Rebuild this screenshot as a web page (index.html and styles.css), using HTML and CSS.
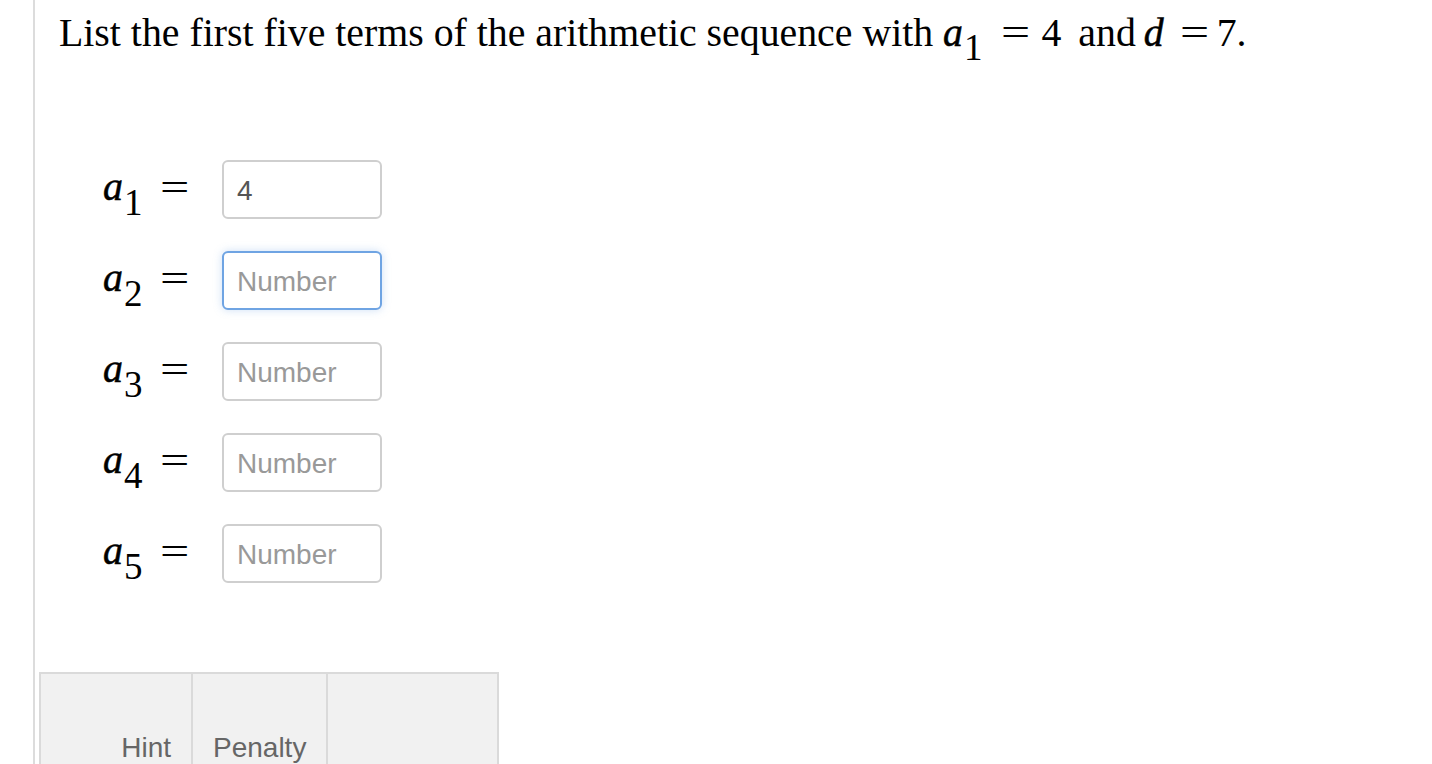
FILE: index.html
```html
<!DOCTYPE html>
<html lang="en">
<head>
  <meta charset="UTF-8">
  <title>Arithmetic Sequence</title>
  <link rel="stylesheet" href="styles.css">
</head>
<body>
<div class="question">
  <p class="prompt">List the first five terms of the arithmetic sequence with <span class="mi">a</span><sub class="msub">1</sub><span class="mo">=</span>4<span class="mtext"> and </span><span class="mi">d</span><span class="mo mo-last">=</span>7.</p>

  <div class="terms">
    <div class="term">
      <span class="label"><span class="mi">a</span><sub class="msub">1</sub></span>
      <span class="eq"><span class="mo">=</span></span>
      <input type="text" class="answer" value="4" placeholder="Number">
    </div>
    <div class="term">
      <span class="label"><span class="mi">a</span><sub class="msub">2</sub></span>
      <span class="eq"><span class="mo">=</span></span>
      <input type="text" class="answer focused" placeholder="Number">
    </div>
    <div class="term">
      <span class="label"><span class="mi">a</span><sub class="msub">3</sub></span>
      <span class="eq"><span class="mo">=</span></span>
      <input type="text" class="answer" placeholder="Number">
    </div>
    <div class="term">
      <span class="label"><span class="mi">a</span><sub class="msub">4</sub></span>
      <span class="eq"><span class="mo">=</span></span>
      <input type="text" class="answer" placeholder="Number">
    </div>
    <div class="term">
      <span class="label"><span class="mi">a</span><sub class="msub">5</sub></span>
      <span class="eq"><span class="mo">=</span></span>
      <input type="text" class="answer" placeholder="Number">
    </div>
  </div>

  <table class="hints">
    <tr>
      <th class="hint-col">Hint</th>
      <th class="penalty-col">Penalty</th>
      <th class="blank-col"></th>
    </tr>
  </table>
</div>
</body>
</html>
```

FILE: styles.css
```css
* {
  margin: 0;
  padding: 0;
  box-sizing: border-box;
}

body {
  font-family: 'Liberation Serif', 'Times New Roman', serif;
  background: #fff;
  color: #000;
  height: 764px;
  overflow: hidden;
}

.question {
  margin-left: 33px;
  border-left: 2px solid #dcdcdc;
  height: 764px;
  overflow: hidden;
  padding-left: 4px;
}

.prompt {
  font-size: 39.8px;
  line-height: 40px;
  height: 53px;
  padding: 13px 0 0 20px;
  white-space: nowrap;
}

/* math bits, roughly the look of the TeX fonts */
.mi {
  font-style: italic;
  -webkit-text-stroke: 0.5px #000;
}

.msub {
  font-size: 37px;
  vertical-align: -14px;
  line-height: 0;
  margin-left: 1px;
}

.mo {
  display: inline-block;
  width: 28px;
  margin: 0 13px 0 18px;
  transform: scaleX(1.3);
  transform-origin: left center;
}

.mo-last {
  margin-left: 16px;
  margin-right: 9px;
}

.mtext {
  margin-left: 7px;
  margin-right: -2px;
}

.terms {
  display: flex;
  flex-direction: column;
  gap: 32px;
  padding: 107px 0 0 64px;
}

.term {
  display: flex;
  align-items: flex-start;
  height: 59px;
}

.label {
  font-size: 40px;
  line-height: 59px;
  width: 57px;
  margin-top: -3px;
  white-space: nowrap;
}

.label .msub {
  vertical-align: -15px;
}

.eq {
  font-size: 40px;
  line-height: 59px;
  width: 62px;
  margin-top: -2px;
}

.eq .mo {
  margin: 0;
}

.answer {
  width: 160px;
  height: 59px;
  border: 2px solid #cfcfcf;
  border-radius: 6px;
  padding: 2px 13px 0;
  font-family: 'Liberation Sans', Helvetica, Arial, sans-serif;
  font-size: 28px;
  color: #555;
  background: #fff;
  outline: none;
}

.answer::placeholder {
  color: #999;
}

.answer.focused {
  border-color: #6fa4e3;
  box-shadow: 0 0 8px rgba(111, 164, 227, 0.35);
}

.hints {
  margin-top: 89px;
  border-collapse: collapse;
  background: #f1f1f1;
  font-family: 'Liberation Sans', Helvetica, Arial, sans-serif;
  font-size: 28px;
  line-height: 32px;
  color: #666;
}

.hints th {
  border: 2px solid #dadada;
  height: 130px;
  vertical-align: top;
  font-weight: normal;
  padding: 58px 20px 0 20px;
}

.hint-col {
  width: 152px;
  text-align: right;
}

.penalty-col {
  width: 135px;
  text-align: left;
}

.blank-col {
  width: 171px;
}
```
